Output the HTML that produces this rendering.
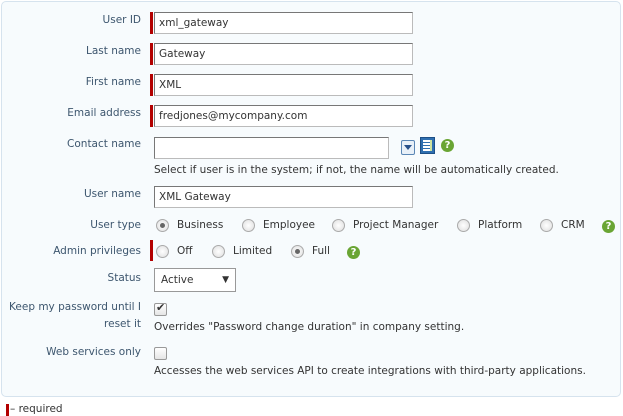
<!DOCTYPE html>
<html><head><style>
body{margin:0;width:623px;height:416px;background:#fff;font-family:"DejaVu Sans","Liberation Sans",sans-serif;font-size:10.5px;color:#333;position:relative;overflow:hidden}
.panel{position:absolute;left:1px;top:1px;width:618px;height:394px;background:#f7fbfd;border:1px solid #d6e3ee;border-radius:5px}
.a{position:absolute;white-space:nowrap}
.l{position:absolute;right:482px;text-align:right;color:#3d566e;white-space:nowrap}
.in{position:absolute;left:154px;border:1px solid #888;border-color:#777 #bbb #bbb #777;background:#fff;line-height:20px;padding-left:4px;box-sizing:border-box;height:22px;width:259px}
.req{position:absolute;left:150px;width:3px;height:22px;background:#b30000}
.r{position:absolute;width:11px;height:11px;border-radius:50%;border:1px solid #aaa;background:radial-gradient(#fff,#ddd)}
.r.on::after{content:"";position:absolute;left:3px;top:3px;width:5px;height:5px;border-radius:50%;background:#666}
.h{position:absolute;width:13px;height:13px;border-radius:50%;background:#6aa534;color:#fff;font-weight:bold;font-size:10px;line-height:13px;text-align:center}
.cb{position:absolute;left:154px;width:11px;height:11px;border:1px solid #999;border-radius:2px;background:linear-gradient(#fff,#e5e5e5)}
</style></head><body>
<div class="panel"></div>
<div class="l" style="top:14px">User ID</div><div class="req" style="top:12px"></div><div class="in" style="top:12px">xml_gateway</div>
<div class="l" style="top:45px">Last name</div><div class="req" style="top:43px"></div><div class="in" style="top:43px">Gateway</div>
<div class="l" style="top:76px">First name</div><div class="req" style="top:74px"></div><div class="in" style="top:74px">XML</div>
<div class="l" style="top:107px">Email address</div><div class="req" style="top:105px"></div><div class="in" style="top:105px">fredjones@mycompany.com</div>
<div class="l" style="top:138px">Contact name</div><div class="in" style="top:137px;width:235px"></div>
<div class="a" style="left:401px;top:140px;width:12px;height:13px;border:1px solid #5a86b5;border-radius:2px;background:#e8f0f8"><div style="margin:4px auto 0;width:0;height:0;border-left:4px solid transparent;border-right:4px solid transparent;border-top:5px solid #27508a"></div></div>
<div class="a" style="left:420px;top:137px;width:15px;height:17px;background:#2f6fb0;border:1px solid #1d4f86;box-sizing:border-box"><div style="position:absolute;left:2px;top:2px;width:7px;height:11px;background:repeating-linear-gradient(#fff 0 2px,transparent 2px 3px)"></div><div style="position:absolute;right:2px;top:2px;width:2px;height:11px;background:#cfe3a0"></div></div>
<div class="h" style="left:441px;top:139px">?</div>
<div class="a" style="left:154px;top:164px">Select if user is in the system; if not, the name will be automatically created.</div>
<div class="l" style="top:188px">User name</div><div class="in" style="top:186px">XML Gateway</div>
<div class="l" style="top:219px">User type</div>
<div class="r on" style="left:156px;top:219px"></div><div class="a" style="left:177px;top:219px">Business</div>
<div class="r" style="left:242px;top:219px"></div><div class="a" style="left:263px;top:219px">Employee</div>
<div class="r" style="left:332px;top:219px"></div><div class="a" style="left:353px;top:219px">Project Manager</div>
<div class="r" style="left:457px;top:219px"></div><div class="a" style="left:478px;top:219px">Platform</div>
<div class="r" style="left:540px;top:219px"></div><div class="a" style="left:561px;top:219px">CRM</div>
<div class="h" style="left:602px;top:220px">?</div>
<div class="l" style="top:245px">Admin privileges</div><div class="req" style="top:240px;height:21px"></div>
<div class="r" style="left:156px;top:245px"></div><div class="a" style="left:177px;top:245px">Off</div>
<div class="r" style="left:212px;top:245px"></div><div class="a" style="left:233px;top:245px">Limited</div>
<div class="r on" style="left:291px;top:245px"></div><div class="a" style="left:312px;top:245px">Full</div>
<div class="h" style="left:347px;top:246px">?</div>
<div class="l" style="top:272px">Status</div>
<div class="a" style="left:154px;top:268px;width:82px;height:24px;border:1px solid #999;box-sizing:border-box;background:#fff;line-height:22px;padding-left:6px">Active<span style="position:absolute;right:6px;font-size:9px">▼</span></div>
<div class="l" style="top:301px">Keep my password until I</div>
<div class="l" style="top:318px">reset it</div>
<div class="cb" style="top:303px"><span style="position:absolute;left:1px;top:-3px;font-size:11px;color:#333">✔</span></div>
<div class="a" style="left:154px;top:321px">Overrides "Password change duration" in company setting.</div>
<div class="l" style="top:346px">Web services only</div>
<div class="cb" style="top:347px"></div>
<div class="a" style="left:154px;top:365px">Accesses the web services API to create integrations with third-party applications.</div>
<div class="a" style="left:6px;top:404px;width:3px;height:12px;background:#b30000"></div>
<div class="a" style="left:10px;top:403px">– required</div>
</body></html>
